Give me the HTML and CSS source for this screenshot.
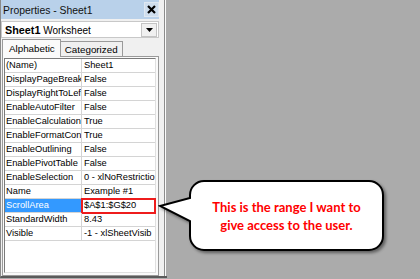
FILE: index.html
```html
<!DOCTYPE html>
<html>
<head>
<meta charset="utf-8">
<link rel="stylesheet" href="styles.css">
</head>
<body>
<div class="app">
  <div class="props">
    <div class="titlebar">
      <span class="title">Properties - Sheet1</span>
      <span class="close"><svg width="9" height="9" viewBox="0 0 9 9"><path d="M1 1L8 8M8 1L1 8" stroke="#000" stroke-width="2.2"/></svg></span>
    </div>
    <div class="combo">
      <span class="obj"><b>Sheet1</b> Worksheet</span>
      <span class="drop"><svg width="7" height="4" viewBox="0 0 7 4"><path d="M0 0H7L3.5 4Z" fill="#000"/></svg></span>
    </div>
    <div class="tabs">
      <div class="tab active">Alphabetic</div>
      <div class="tab">Categorized</div>
    </div>
    <div class="pane">
      <div class="grid">
        <div class="row"><div class="k">(Name)</div><div class="v">Sheet1</div></div>
        <div class="row"><div class="k">DisplayPageBreak</div><div class="v">False</div></div>
        <div class="row"><div class="k">DisplayRightToLef</div><div class="v">False</div></div>
        <div class="row"><div class="k">EnableAutoFilter</div><div class="v">False</div></div>
        <div class="row"><div class="k">EnableCalculation</div><div class="v">True</div></div>
        <div class="row"><div class="k">EnableFormatCon</div><div class="v">True</div></div>
        <div class="row"><div class="k">EnableOutlining</div><div class="v">False</div></div>
        <div class="row"><div class="k">EnablePivotTable</div><div class="v">False</div></div>
        <div class="row"><div class="k">EnableSelection</div><div class="v">0 - xlNoRestrictio</div></div>
        <div class="row"><div class="k">Name</div><div class="v">Example #1</div></div>
        <div class="row"><div class="k selected">ScrollArea</div><div class="v boxed">$A$1:$G$20</div></div>
        <div class="row"><div class="k">StandardWidth</div><div class="v">8.43</div></div>
        <div class="row"><div class="k">Visible</div><div class="v">-1 - xlSheetVisib</div></div>
      </div>
    </div>
  </div>
  <div class="splitter"></div>
  <div class="canvas"></div>
</div>
<div class="callout">
  <svg class="bubble" width="230" height="76" viewBox="0 0 230 76">
    <path d="M46 3H211A14 14 0 0 1 225 17V58A14 14 0 0 1 211 72H46A14 14 0 0 1 32 58V43L2 28L32 20V17A14 14 0 0 1 46 3Z" fill="#fff" stroke="#000" stroke-width="2"/>
  </svg>
  <div class="note">This is the range I want to<br>give access to the user.</div>
</div>
</body>
</html>
```

FILE: styles.css
```css
html, body {
  margin: 0;
  padding: 0;
}
body {
  width: 420px;
  height: 279px;
  overflow: hidden;
  background: #ababab;
  font-family: "Liberation Sans", Arial, sans-serif;
  position: relative;
}
.app {
  display: flex;
  height: 279px;
}
.props {
  width: 158px;
  height: 276px;
  background: #f0f0f0;
  border-left: 1px solid #8a8a8a;
  border-bottom: 2px solid #5a5a5a;
  display: flex;
  flex-direction: column;
}
.splitter {
  width: 8px;
  height: 276px;
  border-bottom: 2px solid #5a5a5a;
  background: linear-gradient(to right, #f0f0f0 0 5px, #8c8c8c 5px 6px, #fafafa 6px 7px, #ababab 7px);
}
.canvas {
  flex: 1;
}
.titlebar {
  height: 19px;
  background: #b9d1ea;
  display: flex;
  align-items: center;
  justify-content: space-between;
  padding: 0 0 0 2px;
}
.title {
  font-size: 10.4px;
  color: #111;
  padding-top: 1px;
}
.close {
  width: 13px;
  height: 13px;
  border: 1px solid #dfe8f2;
  background: #cfdeee;
  display: flex;
  align-items: center;
  justify-content: center;
}
.combo {
  margin: 2px 0 0 0;
  height: 15px;
  background: #fff;
  border: 1px solid #c8c8c8;
  display: flex;
  align-items: center;
  justify-content: space-between;
  padding-left: 3px;
}
.obj {
  font-size: 10px;
  white-space: nowrap;
}
.obj b {
  font-size: 10.8px;
}
.drop {
  width: 14px;
  height: 12px;
  margin-right: 1px;
  background: #f0f0f0;
  border: 1px solid #c4c4c4;
  display: flex;
  align-items: center;
  justify-content: center;
}
.tabs {
  display: flex;
  align-items: flex-end;
  height: 19px;
  padding-left: 1px;
}
.tab {
  font-size: 9.8px;
  height: 15px;
  line-height: 15px;
  padding: 0 4px;
  border: 1px solid #9a9a9a;
  border-bottom: none;
  background: #f0f0f0;
  margin-left: -1px;
}
.tab.active {
  height: 17px;
  line-height: 17px;
  background: #fafafa;
  padding: 0 5px 0 6px;
  position: relative;
  z-index: 1;
  margin-left: 0;
}
.pane {
  flex: 1;
  border: 1px solid #9a9a9a;
  margin: -1px 0 0 1px;
  padding: 1px 2px 2px 1px;
  background: #fafafa;
  display: flex;
}
.grid {
  flex: 1;
  background: #fff;
  border: 1px solid #7a7a7a;
  border-right-color: #e0e0e0;
  border-bottom-color: #e0e0e0;
}
.row {
  display: grid;
  grid-template-columns: 77px 1fr;
  height: 14px;
}
.k, .v {
  font-size: 9.3px;
  line-height: 13px;
  height: 13px;
  white-space: nowrap;
  overflow: hidden;
  border-bottom: 1px solid #d4d4d4;
  padding-left: 1px;
  color: #000;
}
.k {
  border-right: 1px solid #d4d4d4;
}
.v {
  padding-left: 2px;
}
.k.selected {
  background: #3399ff;
  color: #fff;
}
.v.boxed {
  outline: 2px solid #ee1c1c;
  outline-offset: -1px;
}
.callout {
  position: absolute;
  left: 158px;
  top: 178px;
  width: 230px;
  height: 76px;
}
.bubble {
  display: block;
  filter: drop-shadow(2px 2px 1.5px rgba(0, 0, 0, 0.45));
}
.note {
  position: absolute;
  left: 32px;
  top: 3px;
  width: 193px;
  height: 69px;
  display: flex;
  align-items: center;
  justify-content: center;
  text-align: center;
  font-family: Lato, "Open Sans", sans-serif;
  font-weight: 700;
  font-size: 13px;
  line-height: 18px;
  color: #ff0000;
}
```
